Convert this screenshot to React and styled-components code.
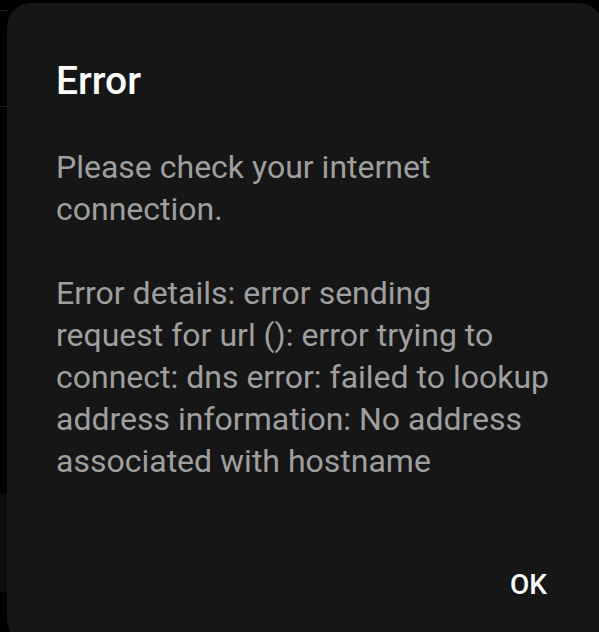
import styled, { createGlobalStyle } from "styled-components";

const GlobalStyle = createGlobalStyle`
  html, body {
    margin: 0;
    padding: 0;
    background: #000;
  }
  * { box-sizing: border-box; }
`;

// page behind the dialog peeks out on the left edge
const Screen = styled.div`
  width: 599px;
  height: 632px;
  overflow: hidden;
  padding: 3px 0 0 7px;
  background:
    linear-gradient(#262626, #262626) 0 10px / 7px 1px no-repeat,
    linear-gradient(#1c1c1c, #1c1c1c) 0 106px / 7px 1px no-repeat,
    linear-gradient(#0c0c0c, #0c0c0c) 0 493px / 7px 99px no-repeat,
    #000;
  font-family: Roboto, "Noto Sans", sans-serif;
`;

const Dialog = styled.div`
  width: 596px;
  height: 640px;
  background: #161616;
  border-radius: 24px;
  padding: 55px 40px 0 49px;
  display: flex;
  flex-direction: column;
`;

const Title = styled.h2`
  margin: 0;
  font-size: 39px;
  line-height: 46px;
  font-weight: 500;
  color: #fff;
`;

const Message = styled.p`
  margin: ${(p) => (p.$first ? "42px" : "42px")} 0 0;
  font-size: 32px;
  line-height: 42px;
  font-weight: 400;
  color: #9f9f9f;
`;

const Actions = styled.div`
  display: flex;
  justify-content: flex-end;
  margin-top: 87px;
  padding-right: 10px;
`;

const TextButton = styled.button`
  background: none;
  border: none;
  padding: 0 6px;
  font-family: inherit;
  font-size: 28px;
  line-height: 32px;
  font-weight: 500;
  color: #fff;
  cursor: pointer;
`;

const App = () => {
  return (
    <>
      <GlobalStyle />
      <Screen>
        <Dialog role="dialog">
          <Title>Error</Title>
          <Message $first>Please check your internet connection.</Message>
          <Message>
            Error details: error sending
            <br />
            request for url (): error trying to
            <br />
            connect: dns error: failed to lookup
            <br />
            address information: No address
            <br />
            associated with hostname
          </Message>
          <Actions>
            <TextButton>OK</TextButton>
          </Actions>
        </Dialog>
      </Screen>
    </>
  );
};

export default App;
